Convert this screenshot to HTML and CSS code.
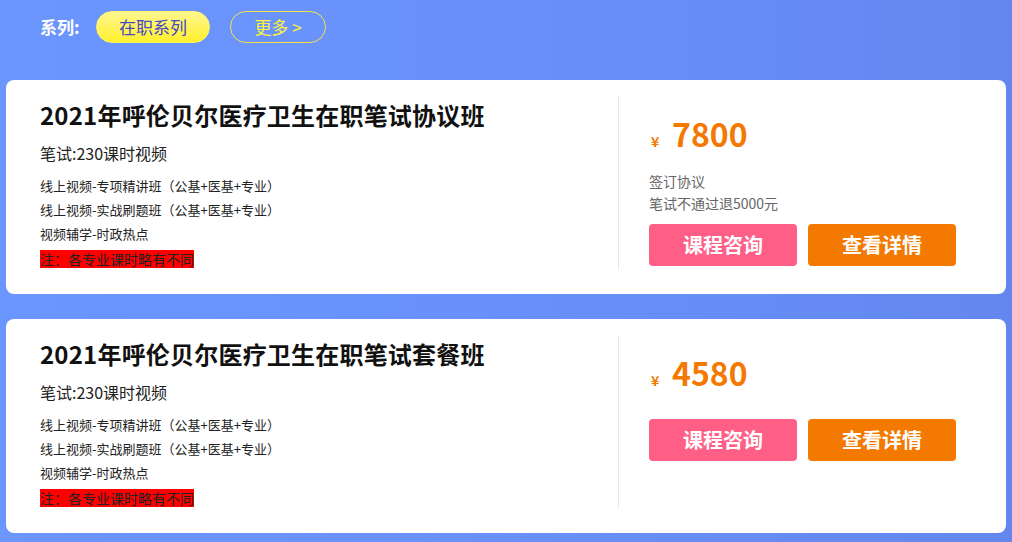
FILE: index.html
```html
<!DOCTYPE html>
<html lang="zh-CN">
<head>
<meta charset="utf-8">
<title>在职系列</title>
<link rel="stylesheet" href="styles.css">
</head>
<body>
<div class="page">
  <div class="series">
    <span class="series-label">系列:</span>
    <span class="pill pill-active">在职系列</span>
    <span class="pill pill-more">更多 &gt;</span>
  </div>

  <div class="card">
    <div class="info">
      <h2 class="title">2021年呼伦贝尔医疗卫生在职笔试协议班</h2>
      <p class="sub">笔试:230课时视频</p>
      <ul class="list">
        <li>线上视频-专项精讲班（公基+医基+专业）</li>
        <li>线上视频-实战刷题班（公基+医基+专业）</li>
        <li>视频辅学-时政热点</li>
        <li><span class="note">注：各专业课时略有不同</span></li>
      </ul>
    </div>
    <div class="side">
      <div class="price"><span class="yen">¥</span><span class="num">7800</span></div>
      <div class="terms">
        <p>签订协议</p>
        <p>笔试不通过退5000元</p>
      </div>
      <div class="btns">
        <a class="btn btn-pink">课程咨询</a>
        <a class="btn btn-orange">查看详情</a>
      </div>
    </div>
  </div>

  <div class="card">
    <div class="info">
      <h2 class="title">2021年呼伦贝尔医疗卫生在职笔试套餐班</h2>
      <p class="sub">笔试:230课时视频</p>
      <ul class="list">
        <li>线上视频-专项精讲班（公基+医基+专业）</li>
        <li>线上视频-实战刷题班（公基+医基+专业）</li>
        <li>视频辅学-时政热点</li>
        <li><span class="note">注：各专业课时略有不同</span></li>
      </ul>
    </div>
    <div class="side">
      <div class="price"><span class="yen">¥</span><span class="num">4580</span></div>
      <div class="btns btns-solo">
        <a class="btn btn-pink">课程咨询</a>
        <a class="btn btn-orange">查看详情</a>
      </div>
    </div>
  </div>
</div>
</body>
</html>
```

FILE: styles.css
```css
* { box-sizing: border-box; }
html, body { margin: 0; padding: 0; }
body {
  width: 1012px;
  height: 542px;
  overflow: hidden;
  background: linear-gradient(90deg, #6b96fe 0%, #6990fa 50%, #6387ef 100%);
  font-family: "Noto Sans CJK SC", "Noto Sans", sans-serif;
  color: #111;
}
p, ul, h2 { margin: 0; padding: 0; }
ul { list-style: none; }

.page { padding: 0 6px; }

.series {
  height: 80px;
  display: flex;
  align-items: flex-start;
  padding: 11px 0 0 34px;
}
.series-label {
  color: #fff;
  font-weight: bold;
  font-size: 17px;
  line-height: 32px;
  width: 56px;
}
.pill {
  height: 32px;
  border-radius: 16px;
  font-size: 17px;
  line-height: 30px;
  text-align: center;
}
.pill-active {
  width: 114px;
  background: linear-gradient(180deg, #fff68f 0%, #fff02c 100%);
  border: 1px solid #fff36a;
  color: #4548c4;
}
.pill-more {
  width: 96px;
  margin-left: 20px;
  border: 1px solid #f3e24a;
  color: #fff23a;
}

.card {
  background: #fff;
  border-radius: 8px;
  height: 214px;
  display: flex;
  margin-bottom: 25px;
}
.info {
  width: 612px;
  padding: 19px 0 0 34px;
}
.title {
  font-size: 24px;
  line-height: 32px;
  font-weight: bold;
  color: #111;
  letter-spacing: 0.2px;
}
.sub {
  margin-top: 10px;
  font-size: 16px;
  line-height: 24px;
  color: #222;
}
.list {
  margin-top: 9px;
  font-size: 13px;
  line-height: 24px;
  color: #222;
}
.note {
  display: inline-block;
  background: #ff0000;
  line-height: 18px;
  height: 18px;
  font-size: 14px;
  vertical-align: middle;
  color: #222;
}

.side {
  flex: 1;
  margin: 16px 0 24px;
  border-left: 1px solid #e9e9e9;
  padding: 19px 0 0 30px;
}
.price {
  height: 36px;
  display: flex;
  align-items: baseline;
  color: #f47900;
}
.yen {
  font-size: 14px;
  margin-left: 2px;
  width: 21px;
  font-weight: bold;
}
.num {
  font-size: 32px;
  font-weight: bold;
  line-height: 36px;
}
.terms {
  margin-top: 19px;
  font-size: 14px;
  line-height: 22px;
  color: #666;
}
.btns {
  margin-top: 10px;
  display: flex;
  gap: 11px;
}
.btns-solo { margin-top: 29px; }
.btn {
  width: 148px;
  height: 42px;
  border-radius: 4px;
  color: #fff;
  font-size: 20px;
  font-weight: bold;
  line-height: 42px;
  text-align: center;
}
.btn-pink { background: #ff5e87; }
.btn-orange { background: #f47900; }
```
